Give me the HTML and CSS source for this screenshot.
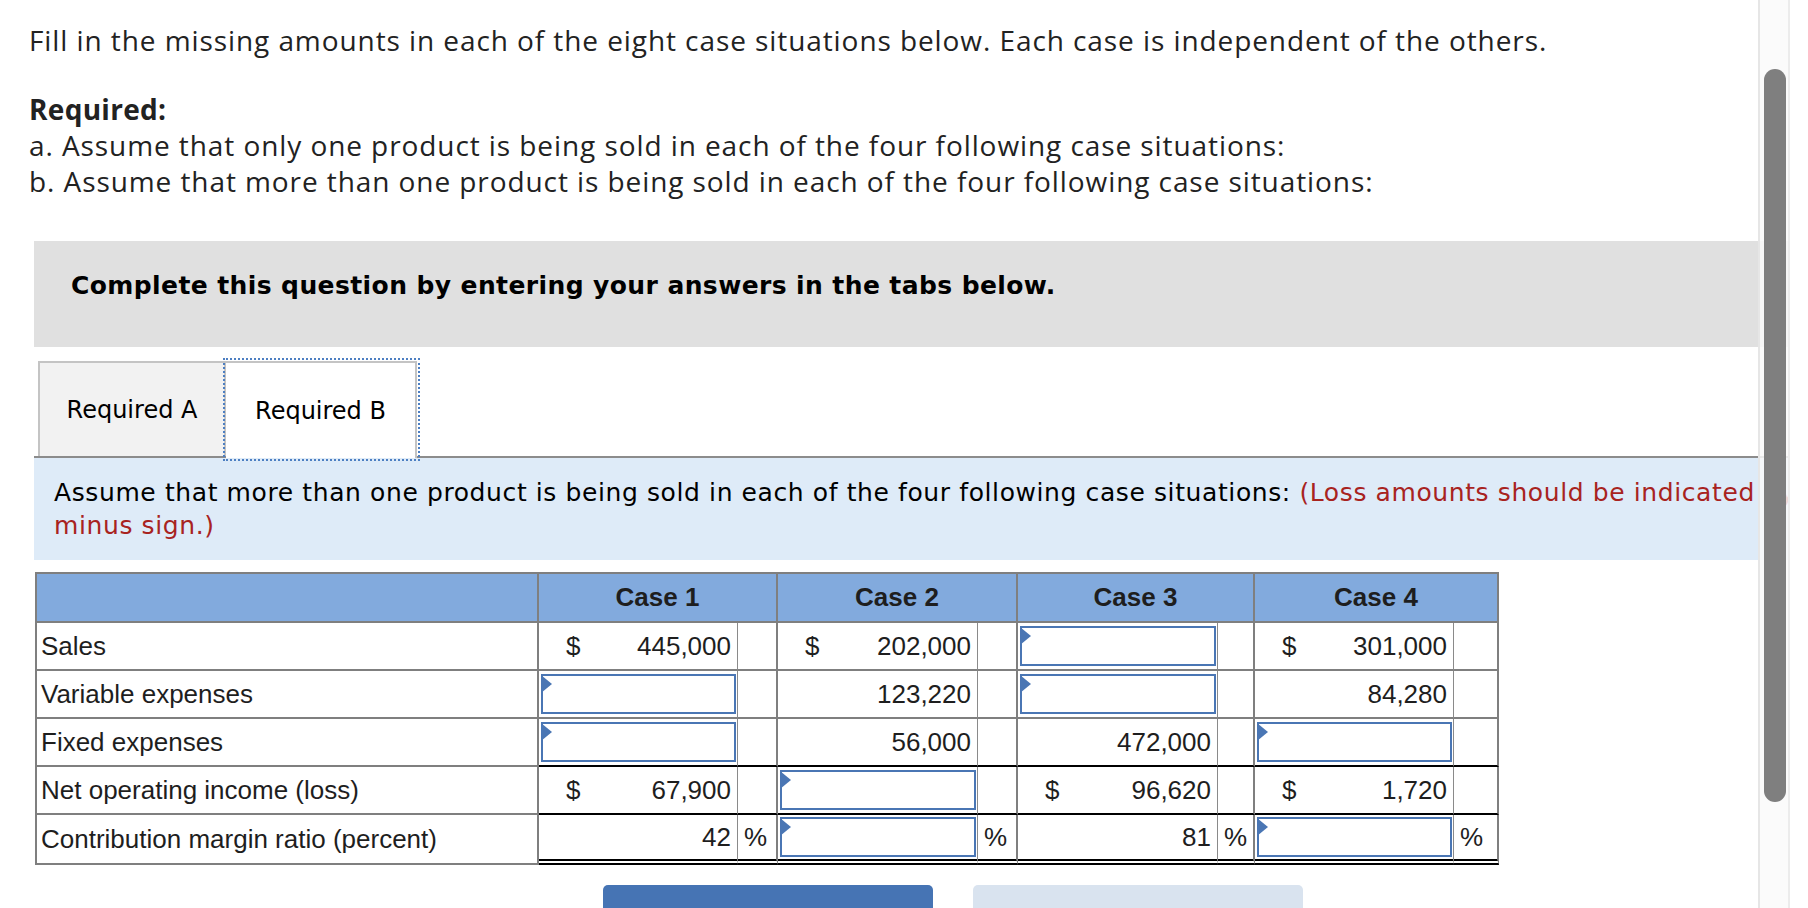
FILE: index.html
```html
<!DOCTYPE html>
<html>
<head>
<meta charset="utf-8">
<title>Case situations</title>
<link rel="stylesheet" href="styles.css">
</head>
<body>
<div class="page">
  <div class="intro">
    <p class="lead">Fill in the missing amounts in each of the eight case situations below. Each case is independent of the others.</p>
    <p class="req"><strong>Required:</strong><br>a. Assume that only one product is being sold in each of the four following case situations:<br>b. Assume that more than one product is being sold in each of the four following case situations:</p>
  </div>

  <div class="banner">Complete this question by entering your answers in the tabs below.</div>

  <div class="tabs">
    <div class="tab">Required A</div>
    <div class="tab active">Required B</div>
  </div>

  <div class="instr">
    <div class="line">Assume that more than one product is being sold in each of the four following case situations: <span class="red">(Loss amounts should be indicated by</span></div>
    <div class="line red">minus sign.)</div>
  </div>

  <table class="grid">
    <colgroup>
      <col class="c-label">
      <col class="c-val1"><col class="c-pct">
      <col class="c-val2"><col class="c-pct">
      <col class="c-val3"><col class="c-pct3">
      <col class="c-val4"><col class="c-pct4">
    </colgroup>
    <thead>
      <tr>
        <th class="hlabel"></th>
        <th colspan="2">Case 1</th>
        <th colspan="2">Case 2</th>
        <th colspan="2">Case 3</th>
        <th colspan="2">Case 4</th>
      </tr>
    </thead>
    <tbody>
      <tr>
        <td class="label">Sales</td>
        <td class="val"><div class="amt"><span class="cur">$</span><span>445,000</span></div></td><td class="pct"></td>
        <td class="val"><div class="amt"><span class="cur">$</span><span>202,000</span></div></td><td class="pct"></td>
        <td class="val"><div class="inp"></div></td><td class="pct"></td>
        <td class="val"><div class="amt"><span class="cur">$</span><span>301,000</span></div></td><td class="pct"></td>
      </tr>
      <tr>
        <td class="label">Variable expenses</td>
        <td class="val"><div class="inp"></div></td><td class="pct"></td>
        <td class="val"><div class="amt"><span></span><span>123,220</span></div></td><td class="pct"></td>
        <td class="val"><div class="inp"></div></td><td class="pct"></td>
        <td class="val"><div class="amt"><span></span><span>84,280</span></div></td><td class="pct"></td>
      </tr>
      <tr class="subtotal">
        <td class="label">Fixed expenses</td>
        <td class="val"><div class="inp"></div></td><td class="pct"></td>
        <td class="val"><div class="amt"><span></span><span>56,000</span></div></td><td class="pct"></td>
        <td class="val"><div class="amt"><span></span><span>472,000</span></div></td><td class="pct"></td>
        <td class="val"><div class="inp"></div></td><td class="pct"></td>
      </tr>
      <tr class="subtotal">
        <td class="label">Net operating income (loss)</td>
        <td class="val"><div class="amt"><span class="cur">$</span><span>67,900</span></div></td><td class="pct"></td>
        <td class="val"><div class="inp"></div></td><td class="pct"></td>
        <td class="val"><div class="amt"><span class="cur">$</span><span>96,620</span></div></td><td class="pct"></td>
        <td class="val"><div class="amt"><span class="cur">$</span><span>1,720</span></div></td><td class="pct"></td>
      </tr>
      <tr class="total">
        <td class="label">Contribution margin ratio (percent)</td>
        <td class="val"><div class="amt"><span></span><span>42</span></div></td><td class="pct">%</td>
        <td class="val"><div class="inp"></div></td><td class="pct">%</td>
        <td class="val"><div class="amt"><span></span><span>81</span></div></td><td class="pct">%</td>
        <td class="val"><div class="inp"></div></td><td class="pct">%</td>
      </tr>
    </tbody>
  </table>

  <div class="nav">
    <button class="btn prev">&lt;&nbsp; Required A</button>
    <button class="btn next">Required B &nbsp;&gt;</button>
  </div>
</div>

<div class="scrollbar"><div class="thumb"></div></div>
</body>
</html>
```

FILE: styles.css
```css
* { box-sizing: border-box; }

html, body {
  margin: 0;
  padding: 0;
  background: #ffffff;
  overflow: hidden;
}

body {
  width: 1808px;
  height: 908px;
  font-family: "Open Sans", "Lato", sans-serif;
  color: #222222;
}

.page {
  width: 1790px;
  height: 908px;
  overflow: hidden;
}

/* intro text */
.intro {
  padding: 22px 0 0 29px;
  font-size: 28px;
  line-height: 36px;
  letter-spacing: 0.92px;
}
.intro p { margin: 0; }
.intro .lead { margin-bottom: 33px; }
.intro strong { font-weight: 700; letter-spacing: 0.3px; }

/* grey banner */
.banner {
  margin: 42px 0 0 34px;
  height: 106px;
  padding: 30px 0 0 37px;
  background: #e0e0e0;
  font-family: "DejaVu Sans", Verdana, sans-serif;
  font-weight: bold;
  font-size: 25px;
  letter-spacing: 0.4px;
  line-height: 30px;
  color: #000000;
}

/* tabs */
.tabs {
  display: flex;
  align-items: flex-end;
  margin: 14px 0 0 34px;
  padding-left: 4px;
  border-bottom: 2px solid #8c8c8c;
  height: 97px;
}
.tab {
  height: 95px;
  width: 188px;
  display: flex;
  align-items: center;
  justify-content: center;
  border: 2px solid #c4c4c4;
  border-bottom: none;
  background: #f2f2f2;
  font-family: "DejaVu Sans", Verdana, sans-serif;
  font-size: 24px;
  color: #000000;
}
.tab.active {
  width: 191px;
  height: 97px;
  margin-bottom: -2px;
  background: #ffffff;
  border-left: none;
  outline: 2px dotted #4d7fc2;
  outline-offset: 1px;
}

/* instruction strip */
.instr {
  margin-left: 34px;
  height: 102px;
  padding: 19px 0 0 20px;
  background: #deebf8;
  font-family: "DejaVu Sans", Verdana, sans-serif;
  font-size: 25px;
  letter-spacing: 0.6px;
  line-height: 32.5px;
  color: #000000;
  white-space: nowrap;
}
.red { color: #a8231f; }

/* table */
.grid {
  margin: 12px 0 0 35px;
  width: 1460px;
  table-layout: fixed;
  border-collapse: separate;
  border-spacing: 0;
  border-top: 2px solid #7f7f7f;
  border-left: 2px solid #7f7f7f;
  font-family: "Liberation Sans", Arial, sans-serif;
  font-size: 26px;
  color: #1e1e1e;
}
.c-label { width: 502px; }
.c-val1 { width: 199px; }
.c-val2 { width: 200px; }
.c-val3 { width: 200px; }
.c-val4 { width: 199px; }
.c-pct { width: 40px; }
.c-pct3 { width: 37px; }
.c-pct4 { width: 45px; }

.grid th {
  height: 49px;
  background: #82aadd;
  font-weight: bold;
  text-align: center;
  border-right: 2px solid #7f7f7f;
  border-bottom: 2px solid #7f7f7f;
  color: #1e1e1e;
  padding: 0;
}
.grid tbody tr { height: 48px; }
.grid td {
  padding: 0;
  border-bottom: 2px solid #7f7f7f;
  vertical-align: middle;
}
.grid td.label {
  padding-left: 4px;
  border-right: 2px solid #7f7f7f;
}
.grid td.val {
  border-right: 1px solid #8a8a8a;
  padding: 2px 1px 2px 2px;
}
.grid td.pct {
  border-right: 2px solid #7f7f7f;
  padding-left: 6px;
}
.grid tr.subtotal td.val,
.grid tr.subtotal td.pct { border-bottom: 2px solid #000000; }
.grid tr.total td.val,
.grid tr.total td.pct { border-bottom: 6px double #000000; }

.amt {
  display: flex;
  justify-content: space-between;
  padding: 0 5px 0 25px;
  height: 40px;
  align-items: center;
}

.inp {
  position: relative;
  height: 40px;
  border: 2px solid #4a76b4;
  background: #ffffff;
}
.inp::before {
  content: "";
  position: absolute;
  left: -2px;
  top: -1px;
  width: 0;
  height: 0;
  border-top: 9px solid transparent;
  border-bottom: 9px solid transparent;
  border-left: 11px solid #4a76b4;
}

/* nav buttons */
.nav {
  display: flex;
  gap: 40px;
  margin: 20px 0 0 603px;
}
.btn {
  width: 330px;
  height: 56px;
  border: none;
  border-radius: 5px;
  font-family: "DejaVu Sans", Verdana, sans-serif;
  font-size: 22px;
  padding-top: 20px;
}
.btn.prev { background: #4674b4; color: #ffffff; }
.btn.next { background: #d9e3ef; color: #ffffff; }

/* overlay scrollbar */
.scrollbar {
  position: fixed;
  top: 0;
  left: 1758px;
  width: 32px;
  height: 908px;
  background: rgba(250, 250, 250, 0.85);
  border-left: 2px solid #e6e6e6;
  border-right: 2px solid #ececec;
}
.thumb {
  position: absolute;
  top: 69px;
  left: 4px;
  width: 22px;
  height: 733px;
  border-radius: 11px;
  background: #7f7f7f;
}
```
